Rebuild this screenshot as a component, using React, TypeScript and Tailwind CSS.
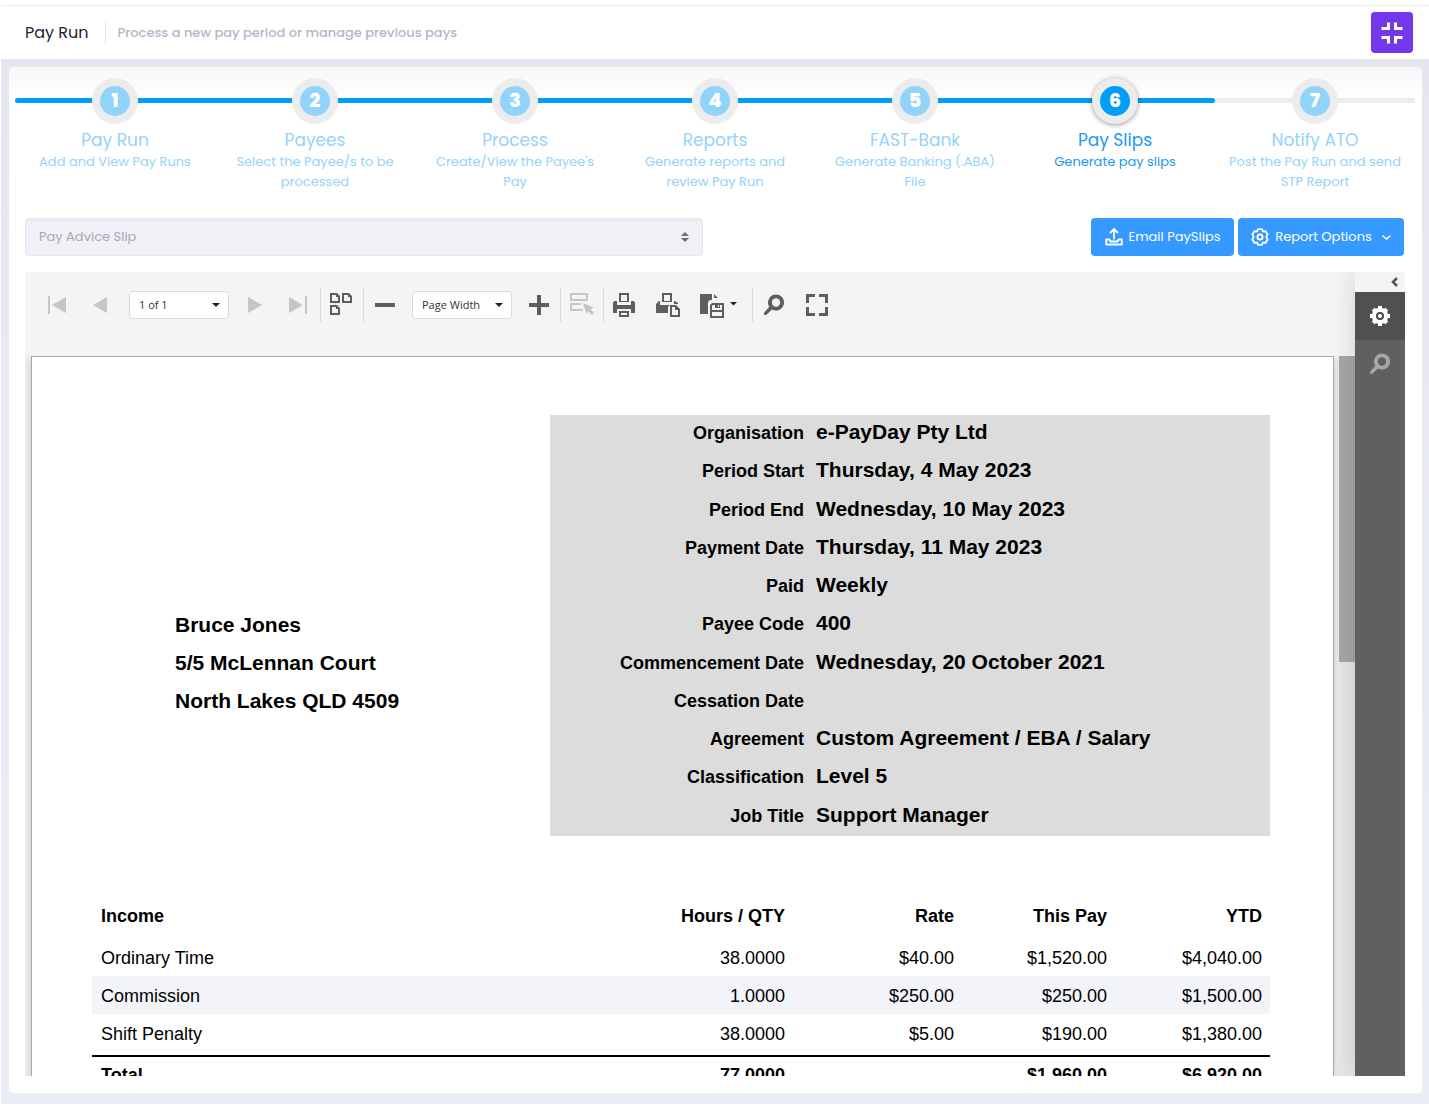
import type { ReactNode } from 'react';

const steps = [
  { title: 'Pay Run', text: 'Add and View Pay Runs' },
  { title: 'Payees', text: 'Select the Payee/s to be processed' },
  { title: 'Process', text: "Create/View the Payee's Pay" },
  { title: 'Reports', text: 'Generate reports and review Pay Run' },
  { title: 'FAST-Bank', text: 'Generate Banking (.ABA) File' },
  { title: 'Pay Slips', text: 'Generate pay slips' },
  { title: 'Notify ATO', text: 'Post the Pay Run and send STP Report' },
];
const ACTIVE_STEP = 5;

const details: [string, string][] = [
  ['Organisation', 'e-PayDay Pty Ltd'],
  ['Period Start', 'Thursday, 4 May 2023'],
  ['Period End', 'Wednesday, 10 May 2023'],
  ['Payment Date', 'Thursday, 11 May 2023'],
  ['Paid', 'Weekly'],
  ['Payee Code', '400'],
  ['Commencement Date', 'Wednesday, 20 October 2021'],
  ['Cessation Date', ''],
  ['Agreement', 'Custom Agreement / EBA / Salary'],
  ['Classification', 'Level 5'],
  ['Job Title', 'Support Manager'],
];

const income = [
  ['Ordinary Time', '38.0000', '$40.00', '$1,520.00', '$4,040.00'],
  ['Commission', '1.0000', '$250.00', '$250.00', '$1,500.00'],
  ['Shift Penalty', '38.0000', '$5.00', '$190.00', '$1,380.00'],
];

function Header() {
  return (
    <header className="flex h-[54px] shrink-0 items-center border-t border-[#ebebf0] bg-white pr-4 pl-6">
      <h1 className="text-base text-[#212134]">Pay Run</h1>
      <span className="mr-3 ml-4 h-[22px] w-px bg-[#e4e4ee]" />
      <p className="text-[13px] font-medium text-[#b7b5c9]">Process a new pay period or manage previous pays</p>
      <button aria-label="Exit full screen" className="ml-auto flex h-[41px] w-[42px] items-center justify-center rounded bg-[#7337ee] text-white">
        <svg width="22" height="22" viewBox="0 0 22 22" fill="none" stroke="currentColor" strokeWidth="3">
          <path d="M0.5 6.5H7.5V0.5M14.5 0.5V6.5H21.5M0.5 15.5H7.5V21.5M14.5 21.5V15.5H21.5" />
        </svg>
      </button>
    </header>
  );
}

function Stepper() {
  return (
    <ol className="mr-[7px] ml-[6px] grid grid-cols-7 pt-[11px]">
      {steps.map((step, i) => (
        <li key={step.title} className="relative flex flex-col items-center text-center">
          <span
            className={
              'absolute inset-x-0 top-5 h-[5px] ' +
              (i <= ACTIVE_STEP ? 'bg-[#009ef7] ' : 'bg-[#ececec] ') +
              (i === 0 ? 'rounded-l-full ' : '') +
              (i >= ACTIVE_STEP ? 'rounded-r-full' : '')
            }
          />
          <span
            className={
              'relative flex size-[46px] items-center justify-center rounded-full bg-[#ececec] ' +
              (i === ACTIVE_STEP ? 'shadow-[0_1px_5px_rgba(0,0,0,0.4)]' : '')
            }
          >
            <span
              className={
                'flex size-[30px] items-center justify-center rounded-full text-[19px] font-extrabold text-white ' +
                (i === ACTIVE_STEP ? 'bg-[#009ef7]' : 'bg-[#92d4f9]')
              }
            >
              {i + 1}
            </span>
          </span>
          <a href="#" className={'mt-1 px-3 ' + (i === ACTIVE_STEP ? 'text-[#1a98f5]' : 'text-[#94d3fa]')}>
            <span className="block text-[17px] leading-6">{step.title}</span>
            <span className="block text-[13px] leading-5">{step.text}</span>
          </a>
        </li>
      ))}
    </ol>
  );
}

function Actions() {
  return (
    <div className="mt-[26px] mr-[18px] ml-4 flex h-[38px]">
      <div className="relative w-[49.2%]">
        <select
          aria-label="Report"
          className="h-full w-full appearance-none rounded border border-[#e6e6ef] bg-[#f0f0f6] px-[13px] text-[13px] text-[#a9a8b6] shadow-[inset_0_2px_2px_rgba(0,0,0,0.03)]"
        >
          <option>Pay Advice Slip</option>
        </select>
        <svg className="pointer-events-none absolute top-[14px] right-[14px]" width="8" height="10" viewBox="0 0 8 10" fill="#6b6b78">
          <path d="M0 4L4 0L8 4ZM0 6L4 10L8 6Z" />
        </svg>
      </div>
      <button className="ml-auto flex w-[143px] items-center justify-center gap-1.5 rounded bg-[#3699ff] text-[13px] whitespace-nowrap text-white">
        <svg width="18" height="18" viewBox="0 0 18 18" fill="none" stroke="currentColor" strokeWidth="1.8" strokeLinejoin="round" strokeLinecap="round">
          <path d="M9 10.5V1.5M5.5 4.5L9 1L12.500 4.500M1.200 11.500H4.500L5.500 13.500H12.500L13.500 11.500H16.800V16.500H1.200Z" />
        </svg>
        Email PaySlips
      </button>
      <button className="ml-1 flex w-[166px] items-center justify-center gap-1.5 rounded bg-[#3699ff] text-[13px] whitespace-nowrap text-white">
        <svg width="18" height="18" viewBox="0 0 18 18" fill="none" stroke="currentColor" strokeWidth="1.8" strokeLinejoin="round">
          <path d="M7 1.200H11L11.800 3.400L14.300 3.100L16.600 6.300L15.300 9L16.600 11.700L14.300 14.900L11.800 14.600L11 16.800H7L6.200 14.600L3.700 14.900L1.400 11.700L2.700 9L1.400 6.300L3.700 3.100L6.200 3.400Z" />
          <circle cx="9" cy="9" r="2.600" />
        </svg>
        Report Options
        <svg className="ml-1" width="9" height="5" viewBox="0 0 9 5" fill="none" stroke="currentColor" strokeWidth="1.4">
          <path d="M0.500 0.500L4.500 4L8.500 0.500" />
        </svg>
      </button>
    </div>
  );
}

function ToolButton({
  label,
  children,
  divided = false,
  muted = false,
  wide = false,
}: {
  label: string;
  children: ReactNode;
  divided?: boolean;
  muted?: boolean;
  wide?: boolean;
}) {
  return (
    <button
      aria-label={label}
      className={
        'flex h-[34px] shrink-0 items-center border-l ' +
        (wide ? 'w-[63px] justify-start pl-[10px] ' : 'w-[43px] justify-center ') +
        (divided ? 'border-[#dadada] ' : 'border-transparent ') +
        (muted ? 'text-[#c6c6c6]' : 'text-[#5e5e5e]')
      }
    >
      <svg width="24" height="24" viewBox="0 0 24 24" fill="currentColor" className="overflow-visible">
        {children}
      </svg>
    </button>
  );
}

function ToolSelect({ label, value, className }: { label: string; value: string; className: string }) {
  return (
    <div className={'relative h-7 w-[100px] shrink-0 ' + className}>
      <select
        aria-label={label}
        className="h-full w-full appearance-none rounded border border-[#d9d9d9] bg-white px-[9px] font-['Open_Sans','Noto_Sans',sans-serif] text-[11px] text-[#333]"
      >
        <option>{value}</option>
      </select>
      <svg className="pointer-events-none absolute top-3 right-[9px]" width="8" height="4" viewBox="0 0 8 4" fill="#222">
        <path d="M0 0H8L4 4Z" />
      </svg>
    </div>
  );
}

const MAGNIFIER = 'M14 1.500A8 8 0 1 1 10 16.400L4.500 21.800Q3 22.500 2.200 21.500Q1.500 20.500 2.300 19.500L7.300 13.800A8 8 0 0 1 14 1.500ZM14 5.300A4.200 4.200 0 1 0 14 13.700A4.200 4.200 0 1 0 14 5.300Z';

function Toolbar() {
  return (
    <div className="flex items-center pt-4 pb-[34px] pl-[11px]">
      <ToolButton label="First page" muted>
        <path d="M2 3H4V21H2ZM6 12L20 4V20Z" />
      </ToolButton>
      <ToolButton label="Previous page" muted>
        <path d="M4 12L18 4V20Z" />
      </ToolButton>
      <ToolSelect label="Page" value="1 of 1" className="mr-[5px] ml-[7px]" />
      <ToolButton label="Next page" muted>
        <path d="M18 12L4 4V20Z" />
      </ToolButton>
      <ToolButton label="Last page" muted>
        <path d="M16 12L2 4V20ZM18 3H20V21H18Z" />
      </ToolButton>
      <ToolButton label="Multipage view" divided>
        <path
          fillRule="evenodd"
          d="M0 0H7L10 3V10H0ZM2 2V8H8V4H6V2ZM12 0H19L22 3V10H12ZM14 2V8H20V4H18V2ZM0 12H7L10 15V22H0ZM2 14V20H8V16H6V14Z"
        />
      </ToolButton>
      <ToolButton label="Zoom out" divided>
        <path d="M2 10H22V14H2Z" />
      </ToolButton>
      <ToolSelect label="Zoom" value="Page Width" className="mr-[5px] ml-[6px]" />
      <ToolButton label="Zoom in">
        <path d="M10 2H14V10H22V14H14V22H10V14H2V10H10Z" />
      </ToolButton>
      <ToolButton label="Highlight editing fields" divided muted>
        <path fillRule="evenodd" d="M0 0H18V8H0ZM2 2V6H16V2Z" />
        <path d="M0 10H11V12H2V16H13V18H0Z" />
        <path d="M13 10L23.500 14.500L21 16.500L24 20L21.500 22L18.500 18.500L16.500 21Z" />
      </ToolButton>
      <ToolButton label="Print" divided>
        <path fillRule="evenodd" d="M6 0H16V9H6ZM8 2V8H14V2Z" />
        <path d="M0 10Q0 8 2 8H4V12H18V8H20Q22 8 22 10V20H18V16H4V20H0Z" />
        <path fillRule="evenodd" d="M6 18H16V24H6ZM8 20V22H14V20Z" />
      </ToolButton>
      <ToolButton label="Print page">
        <path fillRule="evenodd" d="M6 0H16V9H6ZM8 2V8H14V2Z" />
        <path d="M0 11L3 8H4V12H13V13L12 14V20H0ZM18 8H19L22 10V11H18Z" />
        <path fillRule="evenodd" d="M14 12H20L24 16V24H14ZM16 14V22H22V17H19V14Z" />
      </ToolButton>
      <ToolButton label="Export to" wide>
        <path d="M0 1H12V7H10L8 9V21H0ZM14 1L18 5H14Z" />
        <path
          fillRule="evenodd"
          d="M10 12L12 10H24V25H10ZM12 13V17H22V12H20V15H15V12H13ZM12 19V23H22V19Z"
        />
        <path d="M18 12H19V14H18Z" fill="#f4f4f4" />
        <path d="M30 9H37L33.500 12.500Z" fill="#222" />
      </ToolButton>
      <ToolButton label="Search" divided>
        <path fillRule="evenodd" d={MAGNIFIER} />
      </ToolButton>
      <ToolButton label="Full screen">
        <path d="M1 1H10V4H4V10H1ZM14 1H23V10H20V4H14ZM1 14H4V20H10V23H1ZM20 14H23V23H14V20H20Z" />
      </ToolButton>
    </div>
  );
}

function PaySlip() {
  return (
    <article className="min-w-0 flex-1 self-start border border-[#a9a9a9] bg-white pt-[58px] pr-[63px] pb-24 pl-[60px] font-['Liberation_Sans',Arial,sans-serif] text-lg text-black shadow-[0_2px_12px_rgba(0,0,0,0.2)]">
      <div className="flex">
        <address className="flex-1 pt-[191px] pl-[83px] text-[21px] leading-[38px] font-bold whitespace-nowrap not-italic">
          Bruce Jones
          <br />
          5/5 McLennan Court
          <br />
          North Lakes QLD 4509
        </address>
        <dl className="grid h-[421px] w-[720px] auto-rows-fr bg-[#dcdcdc] font-bold">
          {details.map(([label, value]) => (
            <div key={label} className="flex items-baseline">
              <dt className="w-[254px] text-right leading-9">{label}</dt>
              <dd className="pl-3 text-[21px] leading-[34px]">{value || '\u00a0'}</dd>
            </div>
          ))}
        </dl>
      </div>
      <table className="mt-[57px] w-full table-fixed border-separate border-spacing-0 text-right">
        <thead>
          <tr className="h-[45px]">
            <th className="pl-[9px] text-left">Income</th>
            <th className="w-[200px] pr-2">Hours / QTY</th>
            <th className="w-[169px] pr-2">Rate</th>
            <th className="w-[153px] pr-2">This Pay</th>
            <th className="w-[155px] pr-2">YTD</th>
          </tr>
        </thead>
        <tbody>
          {income.map((row) => (
            <tr key={row[0]} className="h-[38px] even:bg-[#f3f4f9]">
              {row.map((cell, i) => (
                <td key={i} className={i === 0 ? 'pt-0.5 pl-[9px] text-left' : 'pt-0.5 pr-2'}>
                  {cell}
                </td>
              ))}
            </tr>
          ))}
        </tbody>
        <tfoot className="before:block before:h-[3px]">
          <tr className="h-[38px] font-bold">
            {['Total', '77.0000', '', '$1,960.00', '$6,920.00'].map((cell, i) => (
              <td key={i} className={'border-t-2 border-black ' + (i === 0 ? 'pl-[9px] text-left' : 'pr-2')}>
                {cell}
              </td>
            ))}
          </tr>
        </tfoot>
      </table>
    </article>
  );
}

function SidePanel() {
  return (
    <aside className="relative flex w-[50px] shrink-0 flex-col bg-[#606060] shadow-[0_0_24px_rgba(0,0,0,0.14)]">
      <button aria-label="Collapse panel" className="flex h-5 items-center justify-end bg-[#f4f4f4] pr-[7px]">
        <svg width="7" height="10" viewBox="0 0 7 10" fill="none" stroke="#555" strokeWidth="2.500">
          <path d="M6 1L2 5L6 9" />
        </svg>
      </button>
      <button aria-label="Preview parameters" className="flex h-12 items-center justify-center bg-[#505050] text-white">
        <svg width="20" height="20" viewBox="0 0 20 20" fill="none" stroke="currentColor">
          <circle cx="10" cy="10" r="6" strokeWidth="4.500" />
          <path d="M10 0V3M10 17V20M0 10H3M17 10H20M3.200 3.200L5 5M15 15L16.800 16.800M16.800 3.200L15 5M3.200 16.800L5 15" strokeWidth="4" />
          <circle cx="10" cy="10" r="3" fill="#fff" stroke="#505050" strokeWidth="2" />
        </svg>
      </button>
      <button aria-label="Search document" className="flex h-12 items-center justify-center text-[#a6a6a6]">
        <svg width="24" height="24" viewBox="0 0 24 24" fill="currentColor">
          <path fillRule="evenodd" d={MAGNIFIER} />
        </svg>
      </button>
    </aside>
  );
}

export default function App() {
  return (
    <div className="flex h-screen flex-col bg-white pt-[5px] pb-[9px] pl-px font-['Poppins',Inter,sans-serif]">
      <Header />
      <main className="flex min-h-0 flex-1 flex-col bg-linear-to-b from-[#e6e6f0] to-[#ebeef7] pt-2 pr-[7px] pb-[11px] pl-2">
        <section className="flex min-h-0 flex-1 flex-col rounded bg-white bg-linear-to-b from-[#f7f7f7] to-white to-[32px] pb-[17px]">
          <Stepper />
          <Actions />
          <div className="mt-4 mr-[17px] ml-4 flex min-h-0 flex-1 overflow-hidden bg-[#f4f4f4]">
            <div className="flex min-w-0 flex-1 flex-col">
              <Toolbar />
              <div className="flex min-h-0 flex-1 overflow-hidden pl-[6px]">
                <PaySlip />
                <div className="relative ml-[5px] w-4 shrink-0 bg-[#e6e6e6]">
                  <div className="h-[306px] bg-[#a6a6a6]" />
                </div>
              </div>
            </div>
            <SidePanel />
          </div>
        </section>
      </main>
    </div>
  );
}
